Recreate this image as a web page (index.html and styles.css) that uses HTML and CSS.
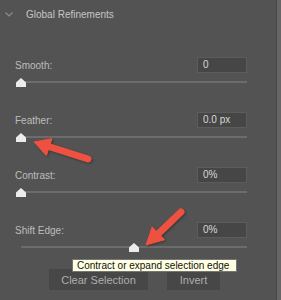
FILE: index.html
```html
<!DOCTYPE html>
<html lang="en">
<head>
    <meta charset="UTF-8">
    <meta name="viewport" content="width=device-width, initial-scale=1.0">
    <title>Global Refinements</title>
    <link rel="stylesheet" href="styles.css">
</head>
<body>
    <div class="panel">
        <div class="panel-main">
            <div class="section-header">
                <svg class="chevron" width="8" height="5" viewBox="0 0 8 5">
                    <polyline points="0.5,0.5 4,4 7.5,0.5" fill="none" stroke="#8c8c8c" stroke-width="1.2"/>
                </svg>
                <span>Global Refinements</span>
            </div>

            <div class="section-body">
                <div class="field">
                    <div class="field-top">
                        <label>Smooth:</label>
                        <div class="value-box">0</div>
                    </div>
                    <div class="slider"><span class="thumb" style="left: 0%;"></span></div>
                </div>

                <div class="field">
                    <div class="field-top">
                        <label>Feather:</label>
                        <div class="value-box">0.0 px</div>
                    </div>
                    <div class="slider"><span class="thumb" style="left: 0%;"></span></div>
                </div>

                <div class="field">
                    <div class="field-top">
                        <label>Contrast:</label>
                        <div class="value-box">0%</div>
                    </div>
                    <div class="slider"><span class="thumb" style="left: 0%;"></span></div>
                </div>

                <div class="field">
                    <div class="field-top">
                        <label>Shift Edge:</label>
                        <div class="value-box">0%</div>
                    </div>
                    <div class="slider"><span class="thumb" style="left: 50%;"></span></div>
                </div>

                <div class="actions">
                    <button class="btn btn-clear">Clear Selection</button>
                    <button class="btn btn-invert">Invert</button>
                </div>
            </div>
        </div>
        <div class="scrollbar"></div>
    </div>

    <div class="tooltip">Contract or expand selection edge</div>

    <svg class="arrows" width="281" height="300" viewBox="0 0 281 300">
        <g fill="#ef5141" stroke="#ef5141">
            <line x1="88" y1="159" x2="47" y2="146" stroke-width="7" stroke-linecap="round"/>
            <polygon points="34,142 52,138.6 46.4,155.6" stroke-width="1" stroke-linejoin="round"/>
            <line x1="181" y1="212" x2="157" y2="235" stroke-width="7" stroke-linecap="round"/>
            <polygon points="146,245 164.6,239.8 152.2,226.8" stroke-width="1" stroke-linejoin="round"/>
        </g>
    </svg>
</body>
</html>
```

FILE: styles.css
```css
body {
    margin: 0;
    padding: 0;
    width: 281px;
    height: 300px;
    overflow: hidden;
    position: relative;
    background: #535353;
    font-family: 'Liberation Sans', Arial, sans-serif;
    font-size: 10px;
    color: #c2c2c2;
}

.panel {
    display: flex;
    height: 300px;
}

.panel-main {
    flex: 1;
}

.scrollbar {
    width: 4px;
    border-left: 1px solid #474747;
    background: #666666;
}

.section-header {
    height: 28px;
    display: flex;
    align-items: center;
    padding-left: 5px;
    color: #c6c6c6;
}

.chevron {
    margin-right: 13px;
}

.section-body {
    padding: 29px 29px 0 15px;
}

.field {
    margin-bottom: 29px;
}

.field:nth-child(4) {
    margin-bottom: 21px;
}

.field-top {
    display: flex;
    justify-content: space-between;
    align-items: center;
    height: 16px;
}

.field-top label {
    color: #bdbdbd;
}

.value-box {
    width: 50px;
    height: 16px;
    box-sizing: border-box;
    background: #464646;
    border: 1px solid #5c5c5c;
    padding-left: 5px;
    line-height: 14px;
    color: #d8d8d8;
}

.slider {
    position: relative;
    height: 2px;
    margin: 8px 0 0 6px;
    background: #6c6c6c;
}

.thumb {
    position: absolute;
    top: -3px;
    width: 10px;
    height: 9px;
    transform: translateX(-50%);
    background: #ececec;
    clip-path: polygon(50% 0, 100% 50%, 100% 100%, 0 100%, 0 50%);
}

.actions {
    display: flex;
    gap: 19px;
    margin-left: 34px;
}

.btn {
    height: 21px;
    border: none;
    background: #474747;
    color: #adadad;
    font-family: 'Liberation Sans', Arial, sans-serif;
    font-size: 11px;
    padding: 0;
}

.btn-clear {
    width: 99px;
}

.btn-invert {
    width: 53px;
}

.tooltip {
    position: absolute;
    left: 72px;
    top: 259px;
    width: 165px;
    height: 13px;
    box-sizing: border-box;
    background: #ffffe1;
    border: 1px solid #767676;
    padding-left: 4px;
    line-height: 11px;
    font-size: 10px;
    color: #111111;
    white-space: nowrap;
}

.arrows {
    position: absolute;
    left: 0;
    top: 0;
    pointer-events: none;
    filter: drop-shadow(1px 1px 1px rgba(0, 0, 0, 0.35));
}
```
